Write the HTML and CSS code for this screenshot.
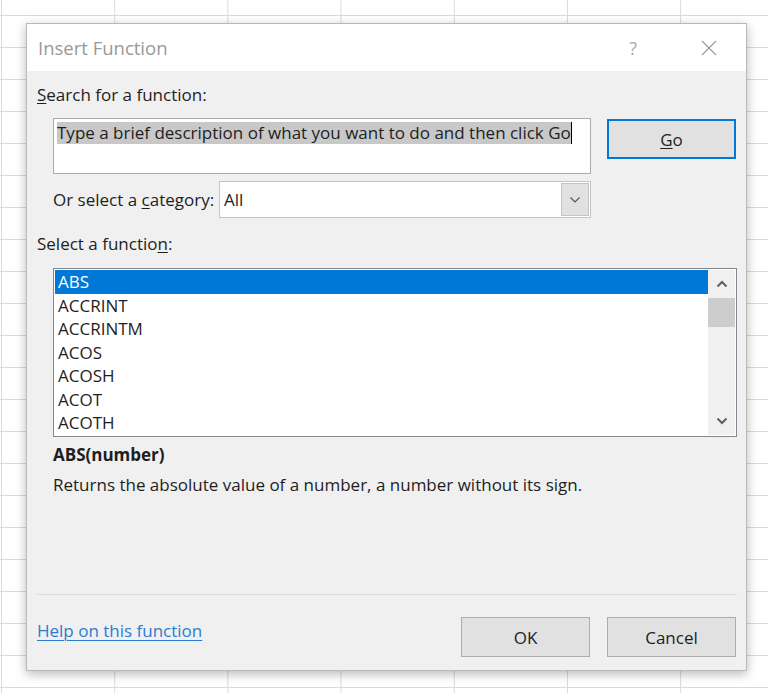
FILE: index.html
```html
<!DOCTYPE html>
<html lang="en">
<head>
    <meta charset="UTF-8">
    <title>Insert Function</title>
    <link rel="stylesheet" href="styles.css">
</head>
<body>
    <div class="dialog">
        <div class="title-bar">
            <span class="title">Insert Function</span>
            <span class="title-help">?</span>
            <svg class="title-close" width="16" height="16" viewBox="0 0 16 16">
                <path d="M1 1 L15 15 M15 1 L1 15" stroke="#999" stroke-width="1.1" fill="none"/>
            </svg>
        </div>

        <div class="dialog-body">
            <div class="label"><u>S</u>earch for a function:</div>

            <div class="search-row">
                <div class="search-box">
                    <span class="search-text">Type a brief description of what you want to do and then click Go</span><span class="caret"></span>
                </div>
                <button class="btn btn-go"><u>G</u>o</button>
            </div>

            <div class="category-row">
                <span class="category-label">Or select a <u>c</u>ategory:</span>
                <div class="combo">
                    <span class="combo-value">All</span>
                    <span class="combo-arrow">
                        <svg width="12" height="8" viewBox="0 0 12 8">
                            <path d="M1.5 1.5 L6 6 L10.5 1.5" stroke="#555" stroke-width="1.2" fill="none"/>
                        </svg>
                    </span>
                </div>
            </div>

            <div class="label label-list">Select a functio<u>n</u>:</div>

            <div class="listbox">
                <ul class="list-items">
                    <li class="selected">ABS</li>
                    <li>ACCRINT</li>
                    <li>ACCRINTM</li>
                    <li>ACOS</li>
                    <li>ACOSH</li>
                    <li>ACOT</li>
                    <li>ACOTH</li>
                </ul>
                <div class="scrollbar">
                    <svg class="scroll-arrow" width="12" height="8" viewBox="0 0 12 8">
                        <path d="M1.5 6.5 L6 2 L10.5 6.5" stroke="#606060" stroke-width="2" fill="none"/>
                    </svg>
                    <div class="scroll-track">
                        <div class="scroll-thumb"></div>
                    </div>
                    <svg class="scroll-arrow" width="12" height="8" viewBox="0 0 12 8">
                        <path d="M1.5 1.5 L6 6 L10.5 1.5" stroke="#606060" stroke-width="2" fill="none"/>
                    </svg>
                </div>
            </div>

            <div class="func-signature">ABS(number)</div>
            <div class="func-desc">Returns the absolute value of a number, a number without its sign.</div>

            <div class="separator"></div>

            <div class="footer">
                <a class="help-link" href="#">Help on this function</a>
                <div class="footer-buttons">
                    <button class="btn">OK</button>
                    <button class="btn">Cancel</button>
                </div>
            </div>
        </div>
    </div>
</body>
</html>
```

FILE: styles.css
```css
/* Page: spreadsheet grid behind the dialog */
body {
    margin: 0;
    padding: 23px 0 0 26px;
    min-height: 693px;
    box-sizing: border-box;
    font-family: "Segoe UI", "Open Sans", sans-serif;
    background-color: #fff;
    background-image:
        linear-gradient(to right, #dadada 1px, transparent 1px),
        linear-gradient(to bottom, #dadada 1px, transparent 1px);
    background-size: 113.2px 32px;
    background-position: 1px 15px;
}

.dialog {
    width: 721px;
    height: 648px;
    box-sizing: border-box;
    background: #f0f0f0;
    border: 1px solid #b9b9b9;
    box-shadow: 0 3px 10px rgba(0, 0, 0, 0.28);
    display: flex;
    flex-direction: column;
}

/* Title bar */
.title-bar {
    height: 47px;
    background: #fff;
    display: flex;
    align-items: center;
    padding-left: 11px;
}

.title {
    font-size: 18.5px;
    color: #999;
    flex: 1;
}

.title-help {
    font-size: 18px;
    color: #aaa;
    margin-right: 64px;
}

.title-close {
    margin-right: 29px;
}

/* Body */
.dialog-body {
    flex: 1;
    padding: 0 9px 0 10px;
    display: flex;
    flex-direction: column;
    color: #1e1e1e;
    font-size: 17px;
}

.label {
    margin-top: 12px;
    height: 24px;
    line-height: 24px;
}

u {
    text-decoration-thickness: 1px;
    text-underline-offset: 2px;
}

/* Search row */
.search-row {
    display: flex;
    align-items: flex-start;
    margin-top: 11px;
    padding-left: 16px;
}

.search-box {
    width: 538px;
    height: 56px;
    box-sizing: border-box;
    background: #fff;
    border: 1px solid #acacac;
    padding: 3px 0 0 3px;
    display: flex;
    align-items: flex-start;
}

.search-text {
    background: #c8c8c8;
    line-height: 22px;
    white-space: nowrap;
}

.caret {
    width: 1px;
    height: 22px;
    background: #000;
}

.btn {
    width: 129px;
    height: 40px;
    box-sizing: border-box;
    background: #e1e1e1;
    border: 1px solid #adadad;
    font-family: inherit;
    font-size: 17px;
    color: #1e1e1e;
    padding: 0;
}

.btn-go {
    margin-left: 16px;
    margin-top: 1px;
    border: 2px solid #0078d7;
}

/* Category row */
.category-row {
    display: flex;
    align-items: center;
    margin-top: 7px;
    padding-left: 16px;
}

.category-label {
    width: 166px;
    white-space: nowrap;
}

.combo {
    width: 372px;
    height: 37px;
    box-sizing: border-box;
    background: #fff;
    border: 1px solid #c4c4c4;
    display: flex;
    align-items: center;
}

.combo-value {
    flex: 1;
    padding-left: 4px;
}

.combo-arrow {
    width: 28px;
    height: 33px;
    margin-right: 1px;
    box-sizing: border-box;
    background: #e1e1e1;
    border: 1px solid #c4c4c4;
    display: flex;
    align-items: center;
    justify-content: center;
}

.label-list {
    margin-top: 14px;
}

/* Function list */
.listbox {
    margin: 12px 0 0 16px;
    height: 169px;
    box-sizing: border-box;
    background: #fff;
    border: 1px solid #828790;
    display: flex;
    padding: 1px;
}

.list-items {
    flex: 1;
    list-style: none;
    margin: 0;
    padding: 0;
    overflow: hidden;
}

.list-items li {
    height: 23.5px;
    line-height: 23.5px;
    padding-left: 3px;
}

.list-items li.selected {
    background: #0078d7;
    color: #fff;
}

.scrollbar {
    width: 27px;
    background: #f0f0f0;
    display: flex;
    flex-direction: column;
    align-items: center;
}

.scroll-arrow {
    margin: 10px 0;
}

.scroll-track {
    flex: 1;
    width: 100%;
}

.scroll-thumb {
    height: 29px;
    background: #cdcdcd;
}

/* Description */
.func-signature {
    margin: 7px 0 0 16px;
    font-weight: bold;
    line-height: 22px;
}

.func-desc {
    margin: 8px 0 0 16px;
    line-height: 22px;
}

.separator {
    margin-top: auto;
    height: 1px;
    background: #dcdcdc;
}

/* Footer */
.footer {
    height: 75px;
    display: flex;
    align-items: flex-start;
    justify-content: space-between;
}

.help-link {
    margin-top: 24px;
    line-height: 24px;
    color: #2b7bd0;
    text-decoration: underline;
    text-decoration-thickness: 1px;
    text-underline-offset: 3px;
}

.footer-buttons {
    display: flex;
    gap: 17px;
    margin: 22px 1px 0 0;
}
```
